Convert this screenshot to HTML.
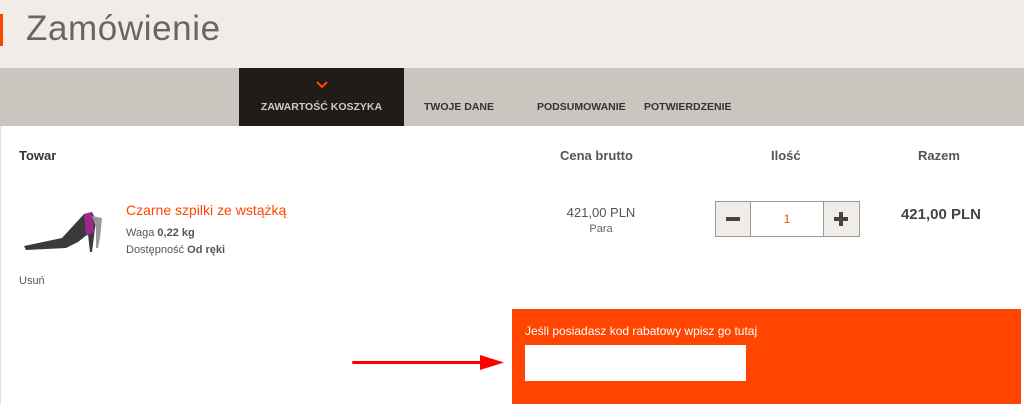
<!DOCTYPE html>
<html><head><meta charset="utf-8"><style>
*{margin:0;padding:0;box-sizing:border-box}
body{width:1024px;height:404px;overflow:hidden;background:#fff;font-family:"Liberation Sans",sans-serif;color:#444;position:relative}
.a{position:absolute}
</style></head><body>
<div class="a" style="left:0;top:0;width:1024px;height:68px;background:#f0ede8"></div>
<div class="a" style="left:0;top:14px;width:3px;height:32px;background:#ff4500"></div>
<div class="a" style="left:26px;top:9px;font-size:35px;color:#666;letter-spacing:0.6px">Zamówienie</div>
<div class="a" style="left:0;top:68px;width:1024px;height:58px;background:#c9c6c0"></div>
<div class="a" style="left:239px;top:68px;width:165px;height:58px;background:#1f1c1a"></div>
<svg class="a" style="left:315px;top:80px" width="14" height="9"><path d="M2 2 L7 7 L12 2" stroke="#ff4500" stroke-width="2" fill="none"/></svg>
<div class="a" style="left:239px;top:101px;width:165px;text-align:center;font-size:10.5px;font-weight:bold;color:#ccc">ZAWARTOŚĆ KOSZYKA</div>
<div class="a" style="left:424px;top:101px;font-size:10.5px;font-weight:bold;color:#333">TWOJE DANE</div>
<div class="a" style="left:537px;top:101px;font-size:10.5px;font-weight:bold;color:#333">PODSUMOWANIE</div>
<div class="a" style="left:644px;top:101px;font-size:10.5px;font-weight:bold;color:#333">POTWIERDZENIE</div>
<div class="a" style="left:0;top:126px;width:1px;height:278px;background:#e4e1dc"></div>
<div class="a" style="left:19px;top:148px;font-size:13px;font-weight:bold;color:#333">Towar</div>
<div class="a" style="left:560px;top:148px;font-size:13px;font-weight:bold;color:#555">Cena brutto</div>
<div class="a" style="left:771px;top:148px;font-size:13px;font-weight:bold;color:#555">Ilość</div>
<div class="a" style="left:918px;top:148px;font-size:13px;font-weight:bold;color:#555">Razem</div>
<svg class="a" style="left:22px;top:206px" width="84" height="48"><path d="M2 40 L40 32 L62 8 L70 6 L74 14 L70 46 L68 46 L66 28 L56 36 L44 42 L4 44Z" fill="#3a3a3a"/><path d="M62 8 L70 6 L72 26 L64 30Z" fill="#9b2a8a"/><path d="M70 10 L80 12 L78 32 L76 42 L74 42 L74 22Z" fill="#999"/></svg>
<div class="a" style="left:126px;top:202px;font-size:14px;color:#ff4500">Czarne szpilki ze wstążką</div>
<div class="a" style="left:126px;top:227px;font-size:11px;color:#555">Waga <b>0,22 kg</b></div>
<div class="a" style="left:126px;top:244px;font-size:11px;color:#555">Dostępność <b>Od ręki</b></div>
<div class="a" style="left:19px;top:275px;font-size:11px;color:#555">Usuń</div>
<div class="a" style="left:540px;top:205px;width:122px;text-align:center;font-size:13px;color:#555">421,00 PLN</div>
<div class="a" style="left:540px;top:223px;width:122px;text-align:center;font-size:11px;color:#666">Para</div>
<div class="a" style="left:715px;top:201px;width:145px;height:36px;border:1px solid #999;background:#f0ede8"></div>
<div class="a" style="left:750px;top:202px;width:74px;height:34px;background:#fff;border-left:1px solid #999;border-right:1px solid #999;text-align:center;line-height:34px;font-size:12px;color:#ff4500">1</div>
<div class="a" style="left:726px;top:217px;width:14px;height:4px;background:#444"></div>
<div class="a" style="left:834px;top:217px;width:14px;height:4px;background:#444"></div>
<div class="a" style="left:839px;top:212px;width:4px;height:14px;background:#444"></div>
<div class="a" style="left:880px;top:206px;width:122px;text-align:center;font-size:15px;font-weight:bold;color:#444">421,00 PLN</div>
<div class="a" style="left:512px;top:309px;width:509px;height:95px;background:#ff4500"></div>
<div class="a" style="left:525px;top:324px;font-size:12px;color:#fff">Jeśli posiadasz kod rabatowy wpisz go tutaj</div>
<div class="a" style="left:525px;top:345px;width:221px;height:36px;background:#fff"></div>
<div class="a" style="left:352px;top:361px;width:132px;height:3px;background:#f00;border-radius:2px"></div>
<svg class="a" style="left:446px;top:354px" width="60" height="18"><path d="M34 1 L58 8.5 L34 16Z" fill="#f00"/></svg>
</body></html>
